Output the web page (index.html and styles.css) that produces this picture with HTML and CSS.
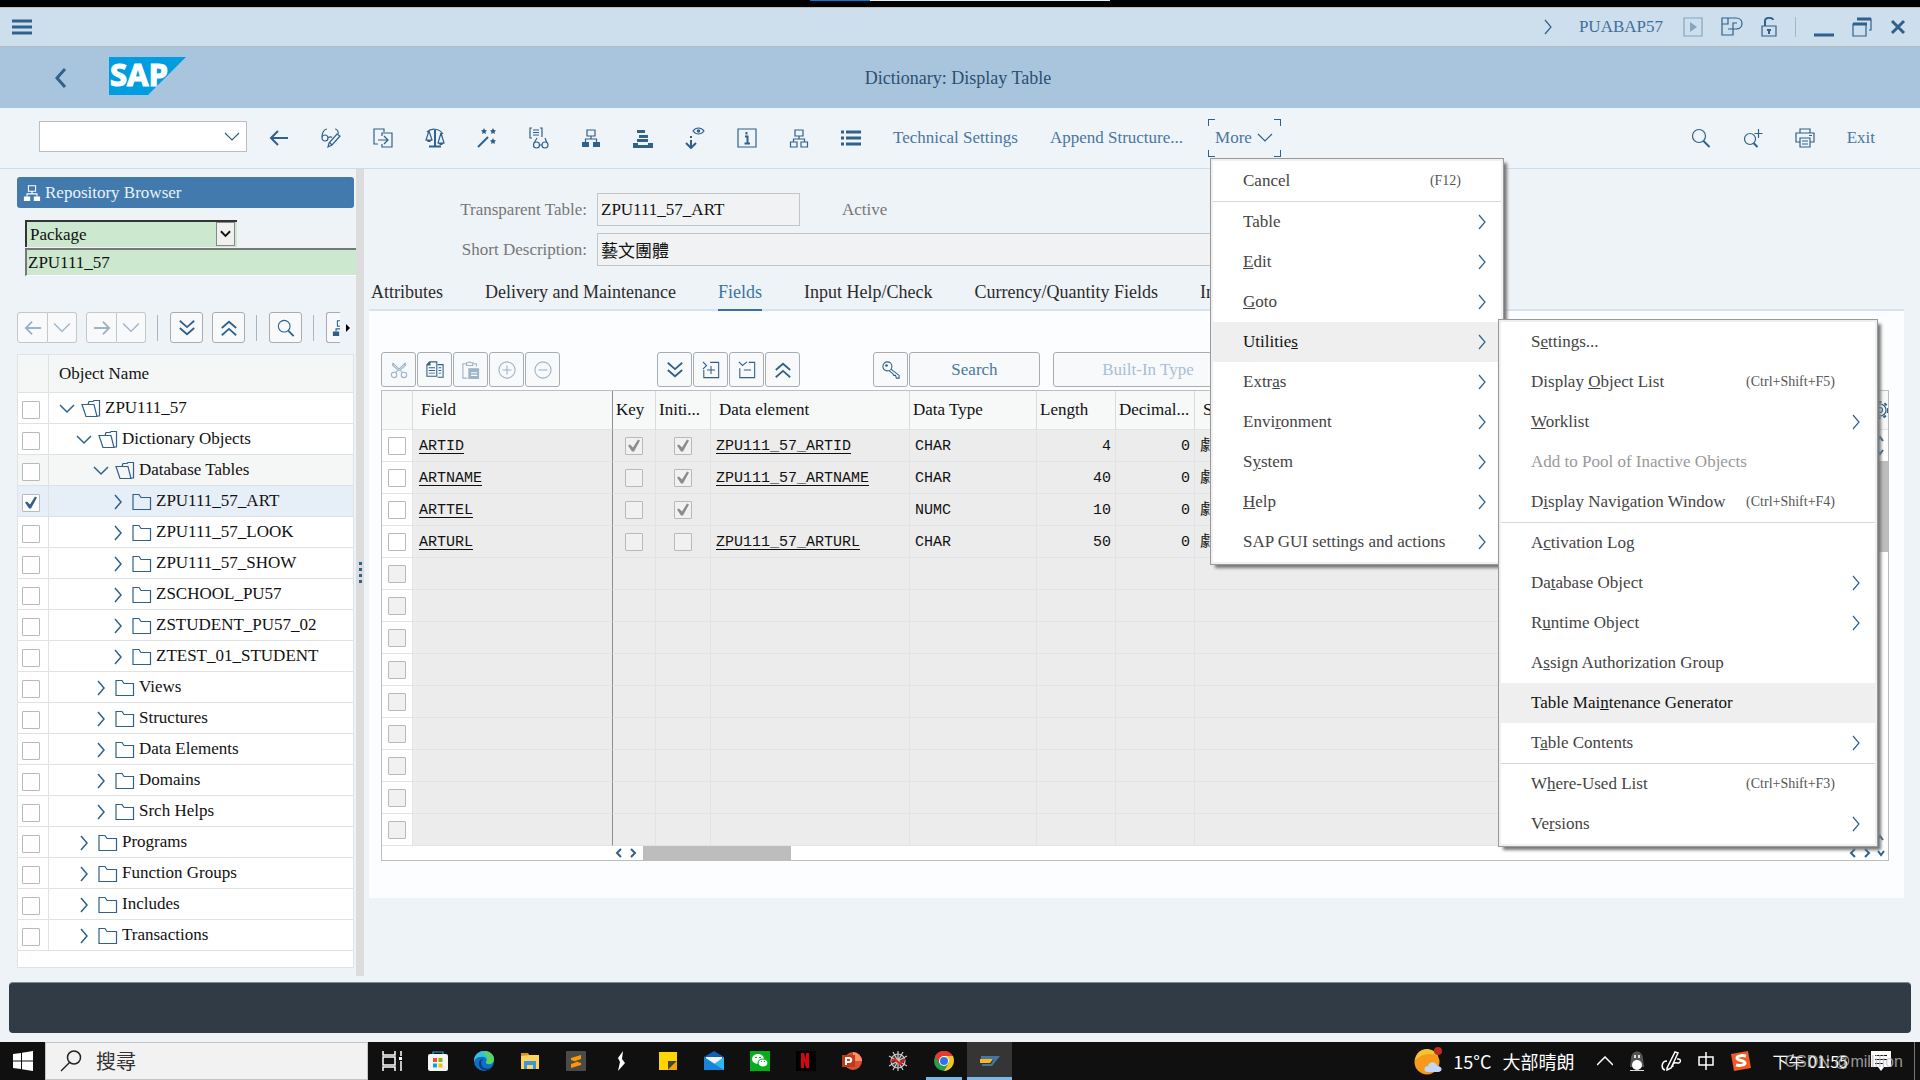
FILE: index.html
```html
<!DOCTYPE html>
<html lang="en">
<head>
<meta charset="utf-8">
<title>Dictionary: Display Table</title>
<link rel="stylesheet" href="styles.css">
</head>
<body>
<svg class="sprite" aria-hidden="true">
  <symbol id="right" viewBox="0 0 10 16"><path d="M2 1l6 7-6 7"/></symbol>
  <symbol id="down" viewBox="0 0 16 10"><path d="M1 1l7 7 7-7"/></symbol>
  <symbol id="folder" viewBox="0 0 20 18"><path d="M1 16.500V1.500h6l2 3h9.500v12z"/></symbol>
  <symbol id="open" viewBox="0 0 20 18"><path d="M1 4.500h12l3 12H5zM7 4.500l1-3h4l1-1h5.500v15.500H16"/></symbol>
  <symbol id="tree" viewBox="0 0 20 20"><path d="M6 2h8v6H6zM10 8v3M4.500 14v-3h11v3"/><path class="f" d="M1 14h7v5H1zM12 14h7v5h-7z"/></symbol>
  <symbol id="treeo" viewBox="0 0 20 20"><path d="M6 2h8v6H6zM10 8v3M4.500 14v-3h11v3M1.500 14h6.500v5H1.500zM12 14h6.500v5H12z"/></symbol>
  <symbol id="mag" viewBox="0 0 20 20"><circle cx="8" cy="8" r="6.500"/><path class="b" d="M12.500 13l6 6"/></symbol>
  <symbol id="magp" viewBox="0 0 20 20"><circle cx="7" cy="11" r="5.500"/><path class="b" d="M10.500 15l4 4"/><path d="M15.500 1v9M11.500 5.500h8"/></symbol>
  <symbol id="left" viewBox="0 0 20 20"><path class="b" d="M19 10H2M9 3l-7 7 7 7"/></symbol>
  <symbol id="arr" viewBox="0 0 20 20"><path class="b" d="M1 10h17M11 3l7 7-7 7"/></symbol>
  <symbol id="dd" viewBox="0 0 20 20"><path class="b" d="M2 2l8 7 8-7M2 10l8 7 8-7"/></symbol>
  <symbol id="uu" viewBox="0 0 20 20"><path class="b" d="M2 10l8-7 8 7M2 18l8-7 8 7"/></symbol>
  <symbol id="print" viewBox="0 0 20 20"><path d="M5 5V1h10v4M5 14H1V5h18v9h-4M5 10h10v9H5zM7 13h6M7 16h6M14 7.500h3"/></symbol>
  <symbol id="glass" viewBox="0 0 20 20"><circle cx="4" cy="10" r="3"/><path d="M1 9c0-4 2-8 5-8M7 9.500c2-1 3-1 4 0M17 6c1-2-1-5-3-5"/><path d="M7 19l1-4 8-9 3 2-8 9zM9 15l2 2"/></symbol>
  <symbol id="copyto" viewBox="0 0 20 20"><path d="M5 16H1V1h10v3M9 8V5h10v14H9v-3M5 12h10M11 8l4 4-4 4"/></symbol>
  <symbol id="scale" viewBox="0 0 20 20"><path class="b" d="M10 2v16M4 18.500h12"/><path d="M2 4c4-4 12-4 16 2M4 3L1 12h6L4 3M16 5l-3 10h6L16 5"/><path class="f" d="M1 12h6l-2 2H3zM13 15h6l-2 2h-2z"/></symbol>
  <symbol id="wand" viewBox="0 0 20 20"><path class="b" d="M1 19L11 9"/><path class="f" d="M7 0l1 2 2 .5-1.500 1.500.5 2-2-1-2 1 .5-2L4 2.500 6 2zM16 0l1 2 2 .5-1.500 1.500.5 2-2-1-2 1 .5-2L13 2.500l2-.5zM16 10l1 2 2 .5-1.500 1.500.5 2-2-1-2 1 .5-2-1.500-1.500 2-.5z"/></symbol>
  <symbol id="where" viewBox="0 0 20 22"><path d="M3 1H1v10h2M11 1h2v9M4 3h6M4 5.500h6M4 8h6"/><circle cx="7.500" cy="18" r="3"/><circle cx="16" cy="18" r="3"/><path d="M5 16l3-5M18 16l-2-5M10.500 18h2.500"/></symbol>
  <symbol id="stack" viewBox="0 0 20 20"><path class="f" d="M4 2h8v3H4zM6 7h9v3H6zM4 11h11v3H4zM0 15h5v2h10v-2h5v5H0z"/></symbol>
  <symbol id="eye" viewBox="0 0 20 22"><path class="b" d="M6 9v2M6 13v7M1 16l5 5 5-5"/><path d="M8 4c3-4 8-4 11 0-3 4-8 4-11 0z"/><circle class="f" cx="13.500" cy="4" r="1.800"/></symbol>
  <symbol id="info" viewBox="0 0 20 20"><path d="M1 1h18v18H1z"/><path class="b" d="M8 8.500h2.500V15M7.500 15.500h5.500M9.500 4v2.500"/></symbol>
  <symbol id="list" viewBox="0 0 20 20"><path class="k" d="M5 4h15M5 10h15M5 16h15"/><path class="k" d="M0 4h3M0 10h3M0 16h3"/></symbol>
  <symbol id="cut" viewBox="0 0 20 20"><circle cx="4.500" cy="15.500" r="3"/><circle cx="15.500" cy="15.500" r="3"/><path d="M3 2l11 11M17 2L6 13M3 2v3l7 6M17 2v3l-7 6"/></symbol>
  <symbol id="copy" viewBox="0 0 20 20"><path d="M13 4h6v14h-6M4 1h8v16H1V4z"/><path class="f" d="M1 5V4l3-3h1v4zM3 7h7v1H3zM3 10h7v1H3zM3 13h7v1H3zM14 7h3v1h-3zM14 10h3v1h-3zM14 13h3v1h-3z"/></symbol>
  <symbol id="paste" viewBox="0 0 20 20"><path d="M6 19H1V3h4M12 3h4v3M5 5V2h2l1.500-1L10 2h2v3z"/><path class="f" d="M7 8h12v12H7z"/><path class="w" d="M10 13h7M10 16h7"/></symbol>
  <symbol id="plus" viewBox="0 0 20 20"><circle cx="10" cy="10" r="9"/><path d="M5 10h10M10 5v10"/></symbol>
  <symbol id="minus" viewBox="0 0 20 20"><circle cx="10" cy="10" r="9"/><path d="M5 10h10"/></symbol>
  <symbol id="ins" viewBox="0 0 20 20"><path d="M9 1.500h9.500v17H2V10M1 1l4 4-4 4M10 5.500v9M5.500 10h9"/></symbol>
  <symbol id="del" viewBox="0 0 20 20"><path d="M12 1.500h6.500v17H2V8M1 1l4 4 5-4M6.500 10h8"/></symbol>
  <symbol id="key" viewBox="0 0 20 20"><circle cx="6" cy="6" r="5"/><path d="M10 9l9 7v3h-3l-1-3h-2l-1-2-4-3"/><circle class="f" cx="5" cy="5" r="1.500"/></symbol>
  <symbol id="gear" viewBox="0 0 20 20"><circle class="d" cx="10" cy="10" r="8"/><circle cx="10" cy="10" r="6"/><circle cx="10" cy="10" r="2.500"/></symbol>
  <symbol id="s-up" viewBox="0 0 8 8"><path class="b" d="M1 6l3-4 3 4"/></symbol>
  <symbol id="s-dn" viewBox="0 0 8 8"><path class="b" d="M1 2l3 4 3-4"/></symbol>
  <symbol id="s-lt" viewBox="0 0 8 10"><path class="b" d="M6 1L2 5l4 4"/></symbol>
  <symbol id="s-rt" viewBox="0 0 8 10"><path class="b" d="M2 1l4 4-4 4"/></symbol>
</svg>

<div class="edge"><span class="edge-blue"></span><span class="edge-white"></span></div>

<header class="titlebar">
  <button class="ico" aria-label="Menu"><svg width="20" height="16" viewBox="0 0 20 16"><path class="k" d="M0 2h20M0 8h20M0 14h20"/></svg></button>
  <div class="session">
    <svg class="chev" width="10" height="16"><use href="#right"/></svg>
    <span class="system">PUABAP57</span>
    <button class="ico dim" aria-label="Run"><svg width="20" height="20" viewBox="0 0 20 20"><path d="M1 1h18v18H1z"/><path class="f" d="M7 5l7 5-7 5z"/></svg></button>
    <button class="ico" aria-label="Personalize"><svg width="22" height="20" viewBox="0 0 22 20"><path d="M1 1h14c8 0 8 11 0 11h-3v6H1zM1 7h6V1M7 12h5V6h4"/></svg></button>
    <button class="ico" aria-label="Lock"><svg width="16" height="20" viewBox="0 0 16 20"><path d="M1 9h14v10H1z"/><path class="b" d="M4 9V4c0-4 8-4 8-1"/><path class="f" d="M6 12h4v2H9v3H7v-3H6z"/></svg></button>
    <span class="bar"></span>
    <button class="ico" aria-label="Minimize"><svg width="20" height="20" viewBox="0 0 20 20"><path class="k" d="M0 18h20"/></svg></button>
    <button class="ico" aria-label="Restore"><svg width="20" height="20" viewBox="0 0 20 20"><path d="M1 7h13v12H1zM5 2h14v11h-2"/><path class="k" d="M1 7h14M5 2h14"/></svg></button>
    <button class="ico" aria-label="Close"><svg width="16" height="16" viewBox="0 0 16 16"><path class="k" d="M2 2l12 12M14 2L2 14"/></svg></button>
  </div>
</header>

<div class="banner">
  <button class="ico" aria-label="Back"><svg width="12" height="20" viewBox="0 0 12 20"><path class="k" d="M10 1L2 10l8 9"/></svg></button>
  <svg class="logo" width="77" height="38" viewBox="0 0 77 38"><path fill="#009de0" stroke="none" d="M0 0h77L39 38H0z"/><text x="1" y="29">SAP</text></svg>
  <h1>Dictionary: Display Table</h1>
</div>

<nav class="toolbar">
  <div class="combo"><input type="text" aria-label="Command"><svg width="16" height="10"><use href="#down"/></svg></div>
  <div class="tools">
    <button class="ico" aria-label="Back"><svg><use href="#left"/></svg></button>
    <button class="ico" aria-label="Display/Change"><svg><use href="#glass"/></svg></button>
    <button class="ico" aria-label="Other object"><svg><use href="#copyto"/></svg></button>
    <button class="ico" aria-label="Check"><svg><use href="#scale"/></svg></button>
    <button class="ico" aria-label="Activate"><svg><use href="#wand"/></svg></button>
    <button class="ico" aria-label="Where-used"><svg><use href="#where"/></svg></button>
    <button class="ico" aria-label="Object list"><svg><use href="#tree"/></svg></button>
    <button class="ico" aria-label="Navigation"><svg><use href="#stack"/></svg></button>
    <button class="ico" aria-label="Display"><svg><use href="#eye"/></svg></button>
    <button class="ico" aria-label="Information"><svg><use href="#info"/></svg></button>
    <button class="ico" aria-label="Hierarchy"><svg><use href="#treeo"/></svg></button>
    <button class="ico" aria-label="Contents"><svg><use href="#list"/></svg></button>
  </div>
  <button class="text">Technical Settings</button>
  <button class="text">Append Structure...</button>
  <div class="more">
    <button class="text">More <svg width="16" height="10"><use href="#down"/></svg></button>
    <ul class="menu">
      <li>Cancel<kbd>(F12)</kbd></li>
      <li class="first sub">Table<svg><use href="#right"/></svg></li>
      <li class="sub"><span><u>E</u>dit</span><svg><use href="#right"/></svg></li>
      <li class="sub"><span><u>G</u>oto</span><svg><use href="#right"/></svg></li>
      <li class="sub on"><span>Utilitie<u>s</u></span><svg><use href="#right"/></svg>
        <ul class="menu wide">
          <li><span>S<u>e</u>ttings...</span></li>
          <li><span>Display <u>O</u>bject List</span><kbd>(Ctrl+Shift+F5)</kbd></li>
          <li class="sub"><span><u>W</u>orklist</span><svg><use href="#right"/></svg></li>
          <li class="off"><span>Add to Pool of Inactive Ob<u>j</u>ects</span></li>
          <li><span>D<u>i</u>splay Navigation Window</span><kbd>(Ctrl+Shift+F4)</kbd></li>
          <li class="first"><span>A<u>c</u>tivation Log</span></li>
          <li class="sub"><span>Da<u>t</u>abase Object</span><svg><use href="#right"/></svg></li>
          <li class="sub"><span>R<u>u</u>ntime Object</span><svg><use href="#right"/></svg></li>
          <li><span>A<u>s</u>sign Authorization Group</span></li>
          <li class="on"><span>Table Mai<u>n</u>tenance Generator</span></li>
          <li class="sub"><span>T<u>a</u>ble Contents</span><svg><use href="#right"/></svg></li>
          <li class="first"><span>W<u>h</u>ere-Used List</span><kbd>(Ctrl+Shift+F3)</kbd></li>
          <li class="sub"><span>Ve<u>r</u>sions</span><svg><use href="#right"/></svg></li>
        </ul>
      </li>
      <li class="sub"><span>Extr<u>a</u>s</span><svg><use href="#right"/></svg></li>
      <li class="sub"><span>Envi<u>r</u>onment</span><svg><use href="#right"/></svg></li>
      <li class="sub"><span>S<u>y</u>stem</span><svg><use href="#right"/></svg></li>
      <li class="sub"><span><u>H</u>elp</span><svg><use href="#right"/></svg></li>
      <li class="sub"><span>SAP GUI settings and actions</span><svg><use href="#right"/></svg></li>
    </ul>
  </div>
  <div class="tools end">
    <button class="ico" aria-label="Find"><svg><use href="#mag"/></svg></button>
    <button class="ico" aria-label="Find next"><svg><use href="#magp"/></svg></button>
    <button class="ico" aria-label="Print"><svg><use href="#print"/></svg></button>
    <button class="text">Exit</button>
  </div>
</nav>

<main>
  <aside>
    <h2><svg><use href="#tree"/></svg>Repository Browser</h2>
    <div class="picker">
      <div class="pick"><select aria-label="Object type"><option>Package</option></select><svg width="12" height="10" viewBox="0 0 12 10"><path class="b" d="M1 2l5 5 5-5"/></svg></div>
      <input type="text" aria-label="Object name" value="ZPU111_57">
    </div>
    <div class="side-tools">
      <div class="pair dim"><button class="box" aria-label="Previous"><svg><use href="#left"/></svg></button><button class="box" aria-label="History"><svg width="16" height="10"><use href="#down"/></svg></button></div>
      <div class="pair dim"><button class="box" aria-label="Next"><svg><use href="#arr"/></svg></button><button class="box" aria-label="Forward history"><svg width="16" height="10"><use href="#down"/></svg></button></div>
      <span class="bar"></span>
      <button class="box" aria-label="Expand"><svg><use href="#dd"/></svg></button>
      <button class="box" aria-label="Collapse"><svg><use href="#uu"/></svg></button>
      <span class="bar"></span>
      <button class="box" aria-label="Find"><svg><use href="#mag"/></svg></button>
      <span class="bar"></span>
      <button class="box cutoff" aria-label="Hierarchy"><svg><use href="#tree"/></svg></button>
      <svg class="tri" width="4" height="8" viewBox="0 0 4 8"><path d="M0 0l4 4-4 4z"/></svg>
    </div>
    <div class="tree">
    <table>
      <thead><tr><th class="c"></th><th>Object Name</th></tr></thead>
      <tbody>
      <tr><td class="c"><input type="checkbox" aria-label="ZPU111_57"></td><td class="l0"><svg class="tw"><use href="#down"/></svg><svg class="fd"><use href="#open"/></svg>ZPU111_57</td></tr>
      <tr><td class="c"><input type="checkbox" aria-label="Dictionary Objects"></td><td class="l1"><svg class="tw"><use href="#down"/></svg><svg class="fd"><use href="#open"/></svg>Dictionary Objects</td></tr>
      <tr class="grey"><td class="c"><input type="checkbox" aria-label="Database Tables"></td><td class="l2"><svg class="tw"><use href="#down"/></svg><svg class="fd"><use href="#open"/></svg>Database Tables</td></tr>
      <tr class="picked"><td class="c"><input type="checkbox" checked aria-label="ZPU111_57_ART"></td><td class="l3"><svg class="tw"><use href="#right"/></svg><svg class="fd"><use href="#folder"/></svg>ZPU111_57_ART</td></tr>
      <tr><td class="c"><input type="checkbox" aria-label="ZPU111_57_LOOK"></td><td class="l3"><svg class="tw"><use href="#right"/></svg><svg class="fd"><use href="#folder"/></svg>ZPU111_57_LOOK</td></tr>
      <tr><td class="c"><input type="checkbox" aria-label="ZPU111_57_SHOW"></td><td class="l3"><svg class="tw"><use href="#right"/></svg><svg class="fd"><use href="#folder"/></svg>ZPU111_57_SHOW</td></tr>
      <tr><td class="c"><input type="checkbox" aria-label="ZSCHOOL_PU57"></td><td class="l3"><svg class="tw"><use href="#right"/></svg><svg class="fd"><use href="#folder"/></svg>ZSCHOOL_PU57</td></tr>
      <tr><td class="c"><input type="checkbox" aria-label="ZSTUDENT_PU57_02"></td><td class="l3"><svg class="tw"><use href="#right"/></svg><svg class="fd"><use href="#folder"/></svg>ZSTUDENT_PU57_02</td></tr>
      <tr><td class="c"><input type="checkbox" aria-label="ZTEST_01_STUDENT"></td><td class="l3"><svg class="tw"><use href="#right"/></svg><svg class="fd"><use href="#folder"/></svg>ZTEST_01_STUDENT</td></tr>
      <tr><td class="c"><input type="checkbox" aria-label="Views"></td><td class="l2"><svg class="tw"><use href="#right"/></svg><svg class="fd"><use href="#folder"/></svg>Views</td></tr>
      <tr><td class="c"><input type="checkbox" aria-label="Structures"></td><td class="l2"><svg class="tw"><use href="#right"/></svg><svg class="fd"><use href="#folder"/></svg>Structures</td></tr>
      <tr><td class="c"><input type="checkbox" aria-label="Data Elements"></td><td class="l2"><svg class="tw"><use href="#right"/></svg><svg class="fd"><use href="#folder"/></svg>Data Elements</td></tr>
      <tr><td class="c"><input type="checkbox" aria-label="Domains"></td><td class="l2"><svg class="tw"><use href="#right"/></svg><svg class="fd"><use href="#folder"/></svg>Domains</td></tr>
      <tr><td class="c"><input type="checkbox" aria-label="Srch Helps"></td><td class="l2"><svg class="tw"><use href="#right"/></svg><svg class="fd"><use href="#folder"/></svg>Srch Helps</td></tr>
      <tr><td class="c"><input type="checkbox" aria-label="Programs"></td><td class="l1"><svg class="tw"><use href="#right"/></svg><svg class="fd"><use href="#folder"/></svg>Programs</td></tr>
      <tr><td class="c"><input type="checkbox" aria-label="Function Groups"></td><td class="l1"><svg class="tw"><use href="#right"/></svg><svg class="fd"><use href="#folder"/></svg>Function Groups</td></tr>
      <tr><td class="c"><input type="checkbox" aria-label="Includes"></td><td class="l1"><svg class="tw"><use href="#right"/></svg><svg class="fd"><use href="#folder"/></svg>Includes</td></tr>
      <tr><td class="c"><input type="checkbox" aria-label="Transactions"></td><td class="l1"><svg class="tw"><use href="#right"/></svg><svg class="fd"><use href="#folder"/></svg>Transactions</td></tr>
      </tbody>
    </table>
    </div>
  </aside>
  <div class="splitter"><i></i><i></i><i></i><i></i></div>
  <section class="work">
    <div class="form">
      <label for="tab">Transparent Table:</label><div class="line"><input id="tab" class="short" type="text" readonly value="ZPU111_57_ART"><span>Active</span></div>
      <label for="desc">Short Description:</label><div class="line"><input id="desc" class="long" type="text" readonly value="藝文團體"></div>
    </div>
    <div class="tabs">
      <a href="#">Attributes</a><a href="#">Delivery and Maintenance</a><a href="#" class="cur">Fields</a><a href="#">Input Help/Check</a><a href="#">Currency/Quantity Fields</a><a href="#">Indexes</a>
    </div>
    <div class="panel">
      <div class="grid-tools">
        <div class="group"><button class="box dim" aria-label="Cut"><svg><use href="#cut"/></svg></button><button class="box" aria-label="Copy"><svg><use href="#copy"/></svg></button><button class="box dim" aria-label="Paste"><svg><use href="#paste"/></svg></button><button class="box dim" aria-label="Insert"><svg><use href="#plus"/></svg></button><button class="box dim" aria-label="Delete"><svg><use href="#minus"/></svg></button></div>
        <div class="group mid"><button class="box" aria-label="Expand"><svg><use href="#dd"/></svg></button><button class="box" aria-label="Expand one"><svg><use href="#ins"/></svg></button><button class="box" aria-label="Collapse one"><svg><use href="#del"/></svg></button><button class="box" aria-label="Collapse"><svg><use href="#uu"/></svg></button></div>
        <div class="group find"><button class="box" aria-label="Key"><svg><use href="#key"/></svg></button><button class="box search">Search</button></div>
        <button class="box type dim">Built-In Type</button>
      </div>
      <div class="grid">
        <div class="rows">
        <table>
          <colgroup><col class="w-sel"><col class="w-field"><col class="w-key"><col class="w-init"><col class="w-elem"><col class="w-type"><col class="w-len"><col class="w-dec"><col></colgroup>
          <thead><tr><th></th><th class="fix">Field</th><th>Key</th><th>Initi...</th><th class="in">Data element</th><th>Data Type</th><th>Length</th><th>Decimal...</th><th class="in">S...</th></tr></thead>
          <tbody>
          <tr><td class="s"><input type="checkbox" aria-label="Row 1"></td><td class="fix"><a href="#">ARTID</a></td><td class="m"><input type="checkbox" disabled checked aria-label="Key"></td><td class="m"><input type="checkbox" disabled checked aria-label="Initial"></td><td><a href="#">ZPU111_57_ARTID</a></td><td>CHAR</td><td class="n">4</td><td class="n">0</td><td>劇</td></tr>
          <tr><td class="s"><input type="checkbox" aria-label="Row 2"></td><td class="fix"><a href="#">ARTNAME</a></td><td class="m"><input type="checkbox" disabled aria-label="Key"></td><td class="m"><input type="checkbox" disabled checked aria-label="Initial"></td><td><a href="#">ZPU111_57_ARTNAME</a></td><td>CHAR</td><td class="n">40</td><td class="n">0</td><td>劇</td></tr>
          <tr><td class="s"><input type="checkbox" aria-label="Row 3"></td><td class="fix"><a href="#">ARTTEL</a></td><td class="m"><input type="checkbox" disabled aria-label="Key"></td><td class="m"><input type="checkbox" disabled checked aria-label="Initial"></td><td></td><td>NUMC</td><td class="n">10</td><td class="n">0</td><td>劇</td></tr>
          <tr><td class="s"><input type="checkbox" aria-label="Row 4"></td><td class="fix"><a href="#">ARTURL</a></td><td class="m"><input type="checkbox" disabled aria-label="Key"></td><td class="m"><input type="checkbox" disabled aria-label="Initial"></td><td><a href="#">ZPU111_57_ARTURL</a></td><td>CHAR</td><td class="n">50</td><td class="n">0</td><td>劇</td></tr>
          <tr><td class="s"><input type="checkbox" disabled aria-label="Row 5"></td><td class="fix"></td><td></td><td></td><td></td><td></td><td></td><td></td><td></td></tr>
          <tr><td class="s"><input type="checkbox" disabled aria-label="Row 6"></td><td class="fix"></td><td></td><td></td><td></td><td></td><td></td><td></td><td></td></tr>
          <tr><td class="s"><input type="checkbox" disabled aria-label="Row 7"></td><td class="fix"></td><td></td><td></td><td></td><td></td><td></td><td></td><td></td></tr>
          <tr><td class="s"><input type="checkbox" disabled aria-label="Row 8"></td><td class="fix"></td><td></td><td></td><td></td><td></td><td></td><td></td><td></td></tr>
          <tr><td class="s"><input type="checkbox" disabled aria-label="Row 9"></td><td class="fix"></td><td></td><td></td><td></td><td></td><td></td><td></td><td></td></tr>
          <tr><td class="s"><input type="checkbox" disabled aria-label="Row 10"></td><td class="fix"></td><td></td><td></td><td></td><td></td><td></td><td></td><td></td></tr>
          <tr><td class="s"><input type="checkbox" disabled aria-label="Row 11"></td><td class="fix"></td><td></td><td></td><td></td><td></td><td></td><td></td><td></td></tr>
          <tr><td class="s"><input type="checkbox" disabled aria-label="Row 12"></td><td class="fix"></td><td></td><td></td><td></td><td></td><td></td><td></td><td></td></tr>
          <tr><td class="s"><input type="checkbox" disabled aria-label="Row 13"></td><td class="fix"></td><td></td><td></td><td></td><td></td><td></td><td></td><td></td></tr>
          </tbody>
        </table>
        <div class="vscroll"><div class="gear"><svg width="20" height="20"><use href="#gear"/></svg></div><svg width="8" height="8"><use href="#s-up"/></svg><svg width="8" height="8"><use href="#s-dn"/></svg><div class="vthumb"></div><svg class="last" width="8" height="8"><use href="#s-up"/></svg></div>
        </div>
        <div class="hscroll"><svg width="8" height="10"><use href="#s-lt"/></svg><svg width="8" height="10"><use href="#s-rt"/></svg><div class="hthumb"></div><svg class="last" width="8" height="10"><use href="#s-lt"/></svg><svg width="8" height="10"><use href="#s-rt"/></svg><svg width="8" height="8"><use href="#s-dn"/></svg></div>
      </div>
    </div>
  </section>
</main>

<div class="status"></div>

<footer class="taskbar">
  <button class="app start" aria-label="Start"><svg width="20" height="20" viewBox="0 0 20 20"><path fill="#fff" d="M0 3l8-1v7.500H0zM9 1.800L20 0v9.500H9zM0 10.500h8V18l-8-1zM9 10.500h11V20L9 18.200z"/></svg></button>
  <label class="lookup"><svg width="22" height="22" viewBox="0 0 22 22"><circle cx="14" cy="7.500" r="6.500"/><path d="M9.500 12.500L1 21"/></svg><input type="text" placeholder="搜尋" aria-label="搜尋"></label>
  <div class="apps">
    <button class="app" aria-label="Task view"><svg width="20" height="20" viewBox="0 0 20 20"><path class="wl" d="M1 0v4h12V0M1 6h12v8H1zM1 20v-4h12v4M19 0v5M19 10v10"/><path fill="#fff" d="M17 6h3v3h-3z"/></svg></button>
    <button class="app" aria-label="Store"><svg width="20" height="20" viewBox="0 0 20 20"><path fill="none" stroke="#29a8e0" d="M5 4V1h10v3"/><rect y="3" width="20" height="17" rx="2" fill="#f5f5f5"/><path fill="#f25022" d="M5 7h4v4H5z"/><path fill="#7fba00" d="M10.500 7h4v4h-4z"/><path fill="#00a4ef" d="M5 12.500h4v4H5z"/><path fill="#ffb900" d="M10.500 12.500h4v4h-4z"/></svg></button>
    <button class="app" aria-label="Edge"><svg width="20" height="20" viewBox="0 0 20 20"><circle cx="10" cy="10" r="10" fill="#0f6fc5"/><path fill="#35c1d8" d="M0 9C1-3 19-3 20 8c0 6-8 6-8 3 2-3-1-6-5-5-4 0-6 2-7 5z"/><path fill="#5ad45a" d="M12 .3c5 1 8 4 8 8 0 6-8 6-8 3 3-4 1-7-3-9z"/><path fill="#083c80" d="M7 11c0 7 7 8 11 5-3 5-12 4-13-2-1-4 2-6 4-6-1 1-2 2-2 3z"/></svg></button>
    <button class="app" aria-label="Files"><svg width="20" height="20" viewBox="0 0 20 20"><path fill="#d99a00" d="M1 2h7l2 3H1z"/><path fill="#ffd35c" d="M1 5l9-1h9v14H1z"/><path fill="#3a96dd" d="M4 18v-8h12v8h-3v-4H7v4z"/></svg></button>
    <button class="app" aria-label="Editor"><svg width="20" height="20" viewBox="0 0 20 20"><rect width="20" height="20" rx="1" fill="#4a4a4a"/><path fill="#ff9800" d="M5 7l10-3v4l-6 2 6 2v2L5 17v-4l6-2-6-2z"/></svg></button>
    <button class="app" aria-label="Notes"><svg width="20" height="20" viewBox="0 0 20 20"><path fill="#fff" d="M11 0L6 7l2 4-2 9 7-8-3-4z"/></svg></button>
    <button class="app" aria-label="Sticky notes"><svg width="20" height="20" viewBox="0 0 20 20"><path fill="#ffd500" d="M1 1h18v18H1z"/><path fill="#444" d="M10 10h9l-9 9z"/><path fill="#f0a800" d="M19 10v9h-9z"/></svg></button>
    <button class="app" aria-label="Mail"><svg width="20" height="20" viewBox="0 0 20 20"><path fill="#0b62b8" d="M0 6l10-6 10 6v6H0z"/><path fill="#f5f5f5" d="M2 6h16v8H2z"/><path fill="#31b5f0" d="M0 6l10 7 10-7v13H0z"/><path fill="#1784d8" d="M0 6l20 13H0z"/></svg></button>
    <button class="app" aria-label="WeChat"><svg width="20" height="20" viewBox="0 0 20 20"><path fill="#07ad1c" d="M0 0h20v20H0z"/><ellipse cx="8" cy="8" rx="6" ry="5" fill="#fff"/><ellipse cx="13" cy="12" rx="5" ry="4" fill="#fff" stroke="#07ad1c"/><path fill="#07ad1c" d="M5 6h2v1H5zM9 6h2v1H9zM11 10h1v1h-1zM14 10h1v1h-1z"/></svg></button>
    <button class="app" aria-label="Netflix"><svg width="20" height="20" viewBox="0 0 20 20"><path d="M0 0h20v20H0z"/><path fill="#d40813" d="M5 2h3l2 7V2h3v15h-3L8 10v7H5z"/></svg></button>
    <button class="app" aria-label="PowerPoint"><svg width="20" height="20" viewBox="0 0 20 20"><circle cx="11" cy="10" r="9" fill="#d35230"/><path fill="#ff8f6b" d="M11 1a9 9 0 0 1 9 9h-9z"/><path fill="#c13b1b" d="M0 4h13v12H0z"/><path fill="none" stroke="#fff" stroke-width="2" d="M4 14V7h3c3 0 3 4 0 4H4"/></svg></button>
    <button class="app" aria-label="Spyder"><svg width="20" height="20" viewBox="0 0 20 20"><circle cx="10" cy="10" r="7" fill="#333" stroke="#ccc"/><path fill="none" stroke="#ccc" d="M10 0v20M1 5l18 10M1 15L19 5M5 1l10 18M15 1L5 19"/><path fill="none" stroke="#e02020" stroke-width="2" d="M3 11l4-3 5 5 5-5"/></svg></button>
    <button class="app run" aria-label="Chrome"><svg width="20" height="20" viewBox="0 0 20 20"><circle cx="10" cy="10" r="10" fill="#2a9d4a"/><path fill="#e53b2e" d="M1 5C5-2 15-2 19 5H10l-5 7z"/><path fill="#fcc31e" d="M10 5h9c3 7-2 15-9 15l5-8z"/><circle cx="10" cy="10" r="5" fill="#fff"/><circle cx="10" cy="10" r="4" fill="#2d74e6"/></svg></button>
    <button class="app run active" aria-label="SAP Logon"><svg width="20" height="20" viewBox="0 0 20 20"><path fill="#3f76ac" d="M1 5h19l-8 10H2v-2h9l3-5H1z"/><path fill="#fdb913" d="M0 8h13l-3 4H0z"/></svg></button>
  </div>
  <div class="tray">
    <svg class="sun" width="30" height="28" viewBox="0 0 30 28"><circle cx="13" cy="15" r="12.500" fill="#f59a1b"/><path fill="#f4c430" d="M1 13C3-1 19-1 24 9 15 5 8 7 1 13z"/><path fill="#c3d8f8" d="M13 25c-4-1-3-6 1-6 1-5 8-5 9 0 6 0 6 6 1 6z"/><circle cx="24" cy="4" r="4" fill="#c42b1c"/></svg>
    <span class="temp">15°C</span><span class="sky">大部晴朗</span>
    <svg width="16" height="10" viewBox="0 0 16 10"><path class="wl" d="M0 9l8-8 8 8"/></svg>
    <svg width="14" height="20" viewBox="0 0 14 20"><path fill="#555" d="M1 8c0-10 12-10 12 0l1 8H0z"/><ellipse cx="7" cy="14" rx="5" ry="5" fill="#fff"/><path fill="#ddd" d="M4 4h2v3H4zM8 4h2v3H8zM0 19h14v1H0z"/></svg>
    <svg width="20" height="20" viewBox="0 0 20 20"><path class="wl" d="M6 17L14 1l3 1-7 15-4 2zM6 10c-6 0-6 8-2 9M16 8c5-1 4 5 0 4-3-1-5 1-4 4"/></svg>
    <svg width="16" height="20" viewBox="0 0 16 20"><path class="wl" d="M1 6h14v8H1zM8 1v18"/></svg>
    <svg width="20" height="20" viewBox="0 0 20 20"><path fill="#f05a23" d="M0 3l17-3 3 17-17 3z"/><path fill="none" stroke="#fff" stroke-width="3" d="M15 5c-4-1-9 0-9 2 0 3 8 2 8 5 0 2-5 3-9 2"/></svg>
    <div class="clock"><time>下午 01:55</time><span class="mark">CSDN @millilion</span></div>
    <svg width="20" height="20" viewBox="0 0 20 20"><path fill="#fff" d="M0 0h20v16h-7l-3 4-3-4H0z"/><path fill="none" stroke="#111" d="M4 4.500h12M4 8.500h12M4 12.500h8"/></svg>
    <span class="desk"></span>
  </div>
</footer>
</body>
</html>
```

FILE: styles.css
```css
* { box-sizing: border-box; }
body {
  margin: 0;
  min-height: 100vh;
  display: flex;
  flex-direction: column;
  background: #eef3f8;
  color: #222;
  font: 17px/20px "Liberation Serif", "Noto Sans CJK TC", serif;
}
button, input, select { font: inherit; color: inherit; margin: 0; }
button { border: 0; padding: 0; background: none; display: flex; align-items: center; justify-content: center; }
h1, h2 { margin: 0; font-weight: normal; }
ul { list-style: none; margin: 0; padding: 0; }
a { color: inherit; }
svg { display: block; flex: none; color: #2f618c; fill: none; stroke: currentColor; stroke-width: 1.2; }
svg .f { fill: currentColor; stroke: none; }
svg .b { stroke-width: 2; }
svg .k { stroke-width: 3; }
svg .w { stroke: #fff; }
svg .d { stroke-dasharray: 3 3; stroke-width: 2; }
svg .wl { stroke: #fff; }
svg text { font: bold 31px "Open Sans", sans-serif; fill: #fff; stroke: #fff; }
.sprite { position: absolute; width: 0; height: 0; color: inherit; stroke: inherit; }
.dim svg { opacity: .45; }

.edge { height: 8px; background: #000; border-bottom: 1px solid #b9bfc4; display: flex; justify-content: center; }
.edge span { height: 1px; }
.edge-blue { width: 60px; background: #0a78d4; }
.edge-white { width: 240px; background: #eee; }

.titlebar { display: flex; align-items: center; justify-content: space-between; height: 39px; padding: 0 14px 0 12px; background: #cddeec; border-bottom: 1px solid #b5b9be; }
.session { display: flex; align-items: center; gap: 18px; }
.session .chev { margin-right: 8px; }
.system { margin-right: 2px; color: #3f6f9c; }
.bar { width: 1px; height: 20px; background: #a9b6c2; }

.banner { display: grid; grid-template-columns: auto auto 1fr 190px; align-items: center; height: 61px; padding-left: 55px; background: #a9c5de; }
.logo { margin-left: 42px; margin-bottom: 4px; }
.banner h1 { text-align: center; font-size: 18px; color: #2c4f70; }

.toolbar { display: flex; align-items: center; height: 61px; padding: 0 45px 0 39px; border-bottom: 1px solid #c9dff0; background: #eff4f9; }
.combo { display: flex; align-items: center; width: 208px; height: 31px; margin-right: 22px; margin-bottom: 3px; padding-right: 6px; background: #fff; border: 1px solid #b9bdc1; }
.combo input { flex: 1; min-width: 0; height: 28px; border: 0; background: none; outline: 0; }
.tools { display: flex; gap: 32px; }
.tools svg { width: 20px; height: 22px; }
.toolbar .text { color: #4a779f; gap: 5px; white-space: nowrap; }
.toolbar > .text { margin-left: 32px; }
.end { margin-left: auto; }
.more { position: relative; display: flex; width: 73px; height: 38px; margin-left: 25px; padding-left: 7px;
  background:
    linear-gradient(#2f618c, #2f618c) 0 0 / 7px 1px, linear-gradient(#2f618c, #2f618c) 0 0 / 1px 7px,
    linear-gradient(#2f618c, #2f618c) 100% 0 / 7px 1px, linear-gradient(#2f618c, #2f618c) 100% 0 / 1px 7px,
    linear-gradient(#2f618c, #2f618c) 0 100% / 7px 1px, linear-gradient(#2f618c, #2f618c) 0 100% / 1px 7px,
    linear-gradient(#2f618c, #2f618c) 100% 100% / 7px 1px, linear-gradient(#2f618c, #2f618c) 100% 100% / 1px 7px;
  background-repeat: no-repeat; }

.menu { position: absolute; z-index: 5; top: 39px; left: 2px; width: 294px; padding: 2px; background: #fff; border: 1px solid #999; box-shadow: inset 0 0 0 2px #f0f0f0, 4px 4px 3px -1px #777; color: #444; }
.menu.wide { top: -3px; left: 285px; width: 380px; }
.menu li { position: relative; display: flex; align-items: center; justify-content: space-between; height: 40px; padding: 0 40px 0 30px; white-space: nowrap; }
.menu li.sub { padding-right: 14px; }
.menu li.first { height: 41px; border-top: 1px solid #d6d9dc; }
.menu li.on { background: #efefef; color: #111; }
.menu .wide { color: #444; }
.menu li.off { color: #999; }
.menu svg { width: 10px; height: 16px; }
kbd { font: 14px/20px "Liberation Serif", serif; color: #555; }

main { display: flex; flex: 1; margin-bottom: 6px; }
aside { width: 356px; padding: 8px 0 0 17px; }
aside h2 { display: flex; align-items: center; gap: 4px; height: 31px; margin-right: 2px; padding-left: 6px; border-radius: 3px; background: #427aad; color: #eaf3fb; font-size: 17px; }
aside h2 svg { width: 18px; height: 20px; color: #fff; }
.picker { margin: 12px 0 36px 8px; }
.pick { position: relative; width: 212px; height: 28px; }
.pick select { appearance: none; width: 100%; height: 27px; padding: 0 3px; border: 2px inset #888; border-right: 0; border-bottom: 0; border-radius: 0; background: #cce8cf; color: #111; }
.pick svg { position: absolute; right: 2px; top: 2px; width: 19px; height: 24px; padding: 0 3px; border: 1px solid #888; background: #f0f0f0; stroke: #111; }
.picker > input { display: block; width: 100%; height: 28px; padding: 0 1px; border: 0; border-top: 2px solid #777; border-left: 2px solid #777; border-bottom: 1px solid #fff; background: #cce8cf; color: #111; }
.side-tools { display: flex; align-items: center; height: 31px; margin-bottom: 11px; gap: 9px; }
.box { height: 31px; width: 33px; border: 1px solid #a9adb1; border-radius: 3px; background: #f8f9fa; color: #4a779f; }
.box svg { width: 18px; height: 18px; }
.pair { display: flex; }
.pair .box { width: 31px; border-color: #c3c7ca; }
.pair .box + .box { width: 29px; border-left: 0; border-radius: 0 3px 3px 0; }
.pair .box:first-child { border-radius: 3px 0 0 3px; }
.pair + .bar { margin-left: 2px; }
.side-tools .bar { height: 26px; margin-right: 3px; }
.side-tools .box + .bar { margin-left: 2px; margin-right: 3px; }
.cutoff { width: 14px; overflow: hidden; border-right: 0; border-radius: 3px 0 0 3px; justify-content: flex-start; padding-left: 5px; }
.side-tools .tri { margin-left: -3px; fill: #000; stroke: none; }

input[type=checkbox] { appearance: none; display: block; width: 18px; height: 18px; border: 1px solid #b9b9bc; border-radius: 1px; background: #fff; }
input[type=checkbox]:checked::after { content: ""; display: block; width: 16px; height: 16px; background: #2f618c; clip-path: polygon(2px 8px, 4px 7px, 7px 10px, 12px 2px, 14px 3px, 8px 14px, 6px 14px); }
input[type=checkbox]:disabled { background: #f1f1f2; }
input[type=checkbox]:disabled:checked::after { background: #8c8c8c; }

table { border-collapse: separate; border-spacing: 0; table-layout: fixed; width: 100%; }
th { font-weight: normal; text-align: left; padding: 0; white-space: nowrap; overflow: hidden; }
td { padding: 0; white-space: nowrap; overflow: hidden; }
.tree { height: 614px; margin-right: 2px; border: 1px solid #dfe3e6; background: #fff; color: #111; }
.tree th { height: 38px; background: #f5f6f6; padding-left: 10px; }
.tree th, .tree td { border-bottom: 1px solid #dfe1e2; }
.tree td { height: 31px; }
.tree .c { width: 31px; padding-left: 4px; border-right: 1px solid #dfe1e2; }
.tree td.c { padding-top: 3px; }
.tree td svg { display: inline-block; vertical-align: middle; }
.tree .tw { width: 16px; height: 16px; margin-right: 6px; stroke-width: 1.500; }
.tree .fd { width: 20px; height: 18px; margin-right: 4px; }
.tree tr.grey td { background: #f5f6f6; }
.tree tr.picked td { background: #e6eef7; }
.l0 { padding-left: 10px; }
.l1 { padding-left: 27px; }
.l2 { padding-left: 44px; }
.l3 { padding-left: 61px; }

.splitter { display: flex; flex-direction: column; align-items: center; justify-content: center; gap: 3px; width: 8px; background: #dcdcdc; }
.splitter i { width: 3px; height: 3px; background: #2f618c; }

.work { flex: 1; min-width: 0; padding: 24px 16px 0 5px; }
.form { display: grid; grid-template-columns: 218px 1fr; column-gap: 10px; row-gap: 7px; align-items: center; }
.form label { text-align: right; color: #777; }
.line { display: flex; align-items: center; color: #777; }
.line input { height: 33px; padding: 0 3px; border: 1px solid #c3c6c8; background: #f0f2f3; color: #111; }
.short { width: 203px; margin-right: 42px; }
.long { width: 720px; }
.tabs { display: flex; gap: 42px; height: 45px; padding-left: 2px; border-bottom: 2px solid #d5e4f2; font-size: 18px; }
.tabs a { display: flex; align-items: center; height: 45px; padding-top: 8px; border-bottom: 2px solid transparent; color: #2b2b2b; text-decoration: none; white-space: nowrap; }
.tabs a.cur { color: #3b73a5; border-color: #3a6f9f; }
.panel { padding: 41px 15px 37px 12px; background: #fcfdff; }
.grid-tools { display: flex; margin-bottom: 3px; }
.group { display: flex; gap: 1px; }
.grid-tools .box { width: 35px; height: 35px; }
.mid { margin-left: 97px; }
.find { margin: 0 13px 0 73px; }
.grid-tools .search { width: 131px; }
.grid-tools .type { width: 190px; }
.type.dim { color: #a9bfd3; }
.grid { border: 1px solid #bcbfc2; background: #fff; }
.rows { display: flex; }
.rows table { flex: 1; min-width: 0; }
.w-sel { width: 31px; }
.w-field { width: 200px; }
.w-key { width: 43px; }
.w-init { width: 55px; }
.w-elem { width: 199px; }
.w-type { width: 127px; }
.w-len { width: 79px; }
.w-dec { width: 79px; }
.rows th { height: 39px; padding-left: 3px; background: #f7f8f8; border-right: 1px solid #d9dbdc; border-bottom: 1px solid #e0e2e3; color: #111; }
.rows th.in, .rows th.fix { padding-left: 8px; }
.rows td { height: 32px; padding: 2px 0 0 5px; background: #ececec; border-right: 1px solid #e2e3e4; border-bottom: 1px solid #e2e3e4; color: #111; font: 15px/20px "Liberation Mono", "Noto Sans CJK TC", monospace; }
.rows th.fix, .rows td.fix { border-right: 1px solid #8c8f92; }
.rows td.fix { padding-left: 6px; }
.rows td.s { padding: 0 0 0 6px; background: #fff; }
.rows td.m input { margin: 0 auto; }
.rows td.m { padding: 0; }
.rows td.n { text-align: right; padding-right: 4px; }
.rows a { text-underline-offset: 3px; }
.vscroll { display: flex; flex-direction: column; align-items: center; gap: 5px; width: 16px; overflow: hidden; }
.gear { width: 16px; height: 39px; display: flex; align-items: center; justify-content: center; background: #f7f8f8; border-bottom: 1px solid #e0e2e3; }
.vthumb { width: 16px; height: 91px; background: #bdbdbd; }
.vscroll .last { margin-top: auto; margin-bottom: 4px; }
.hscroll { display: flex; align-items: center; gap: 6px; height: 14px; padding: 0 3px 0 233px; }
.hthumb { width: 148px; height: 14px; background: #bdbdbd; }
.hscroll .last { margin-left: auto; }

.status { height: 51px; margin: 0 9px 9px; border-radius: 4px; background: #303b46; border-top: 1px solid #7d8b94; }

.taskbar { display: flex; align-items: center; height: 38px; background: #101010; color: #fff; font: 18px/24px "Noto Sans CJK TC", sans-serif; }
.taskbar svg { stroke: none; fill: #000; }
.taskbar .wl { fill: none; stroke: #fff; stroke-width: 1.500; }
.app { width: 46px; height: 38px; }
.app.start { width: 45px; }
.lookup { display: flex; align-items: center; width: 323px; height: 38px; padding-left: 14px; gap: 12px; background: #f2f2f2; border: 1px solid #c4c4c4; }
.taskbar .lookup svg { fill: none; stroke: #222; stroke-width: 1.500; }
.lookup input { width: 240px; border: 0; background: none; outline: 0; font-size: 20px; }
.lookup input::placeholder { color: #333; opacity: 1; }
.apps { display: flex; }
.apps .app:first-child { width: 47px; }
.app.run { box-shadow: inset 0 -3px #76b9ed; width: 36px; margin: 0 5px; }
.app.active { width: 45px; margin: 0; background: #353535; }
.tray { display: flex; align-items: center; gap: 17px; margin-left: auto; }
.sun { margin-right: -8px; }
.sky { margin: 0 6px 0 -6px; }
.clock { position: relative; padding: 0 6px 0 4px; font-size: 16px; white-space: nowrap; }
.mark { position: absolute; z-index: 2; left: 16px; top: 3px; font: 16px/20px "Liberation Sans", sans-serif; color: rgba(190, 190, 190, .8); }
.desk { width: 6px; height: 38px; margin-left: 6px; border-left: 1px solid #777; }
```
